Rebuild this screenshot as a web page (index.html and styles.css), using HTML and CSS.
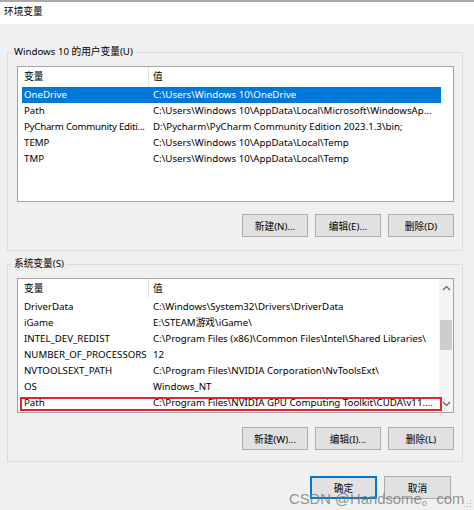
FILE: index.html
```html
<!DOCTYPE html>
<html lang="zh-CN">
<head>
<meta charset="utf-8">
<title>环境变量</title>
<link rel="stylesheet" href="styles.css">
</head>
<body>
<div class="window">
  <div class="titlebar">环境变量</div>
  <div class="content">
    <fieldset class="group group-user">
      <legend>Windows 10 的用户变量(U)</legend>
      <div class="list list-user">
        <div class="list-main">
          <div class="row head"><span class="c1">变量</span><span class="c2">值</span></div>
          <div class="row sel"><span class="c1">OneDrive</span><span class="c2">C:\Users\Windows 10\OneDrive</span></div>
          <div class="row"><span class="c1">Path</span><span class="c2">C:\Users\Windows 10\AppData\Local\Microsoft\WindowsAp...</span></div>
          <div class="row"><span class="c1 tight">PyCharm Community Editi...</span><span class="c2">D:\Pycharm\PyCharm Community Edition 2023.1.3\bin;</span></div>
          <div class="row"><span class="c1">TEMP</span><span class="c2">C:\Users\Windows 10\AppData\Local\Temp</span></div>
          <div class="row"><span class="c1">TMP</span><span class="c2">C:\Users\Windows 10\AppData\Local\Temp</span></div>
        </div>
      </div>
      <div class="buttons">
        <button class="btn">新建(N)...</button>
        <button class="btn">编辑(E)...</button>
        <button class="btn">删除(D)</button>
      </div>
    </fieldset>

    <fieldset class="group group-sys">
      <legend>系统变量(S)</legend>
      <div class="list list-sys">
        <div class="list-main">
          <div class="row head"><span class="c1">变量</span><span class="c2">值</span></div>
          <div class="row"><span class="c1">DriverData</span><span class="c2">C:\Windows\System32\Drivers\DriverData</span></div>
          <div class="row"><span class="c1">iGame</span><span class="c2">E:\STEAM游戏\iGame\</span></div>
          <div class="row"><span class="c1">INTEL_DEV_REDIST</span><span class="c2">C:\Program Files (x86)\Common Files\Intel\Shared Libraries\</span></div>
          <div class="row"><span class="c1">NUMBER_OF_PROCESSORS</span><span class="c2">12</span></div>
          <div class="row"><span class="c1">NVTOOLSEXT_PATH</span><span class="c2">C:\Program Files\NVIDIA Corporation\NvToolsExt\</span></div>
          <div class="row"><span class="c1">OS</span><span class="c2">Windows_NT</span></div>
          <div class="row marked"><span class="c1">Path</span><span class="c2">C:\Program Files\NVIDIA GPU Computing Toolkit\CUDA\v11....</span></div>
        </div>
        <div class="scrollbar">
          <div class="sb-arrow">
            <svg width="9" height="6" viewBox="0 0 9 6"><polyline points="1,5 4.5,1.5 8,5" fill="none" stroke="#606060" stroke-width="1.2"/></svg>
          </div>
          <div class="sb-track"><div class="sb-thumb"></div></div>
          <div class="sb-arrow">
            <svg width="9" height="6" viewBox="0 0 9 6"><polyline points="1,1 4.5,4.5 8,1" fill="none" stroke="#606060" stroke-width="1.2"/></svg>
          </div>
        </div>
      </div>
      <div class="buttons">
        <button class="btn">新建(W)...</button>
        <button class="btn">编辑(I)...</button>
        <button class="btn">删除(L)</button>
      </div>
    </fieldset>

    <div class="dialog-buttons">
      <button class="btn btn-wide btn-default">确定</button>
      <button class="btn btn-wide">取消</button>
    </div>
  </div>
  <div class="watermark">CSDN @Handsome。com</div>
  <svg class="grip" width="8" height="8" viewBox="0 0 8 8">
    <rect x="6" y="0" width="1" height="1" fill="#b0b0b0"/>
    <rect x="3" y="3" width="1" height="1" fill="#b0b0b0"/>
    <rect x="6" y="3" width="1" height="1" fill="#b0b0b0"/>
    <rect x="0" y="6" width="1" height="1" fill="#b0b0b0"/>
    <rect x="3" y="6" width="1" height="1" fill="#b0b0b0"/>
    <rect x="6" y="6" width="1" height="1" fill="#b0b0b0"/>
  </svg>
</div>
</body>
</html>
```

FILE: styles.css
```css
* {
  box-sizing: border-box;
}

html,
body {
  margin: 0;
  padding: 0;
}

body {
  width: 474px;
  height: 510px;
  overflow: hidden;
  background: #f0f0f0;
  font-family: "Noto Sans", "Noto Sans CJK SC", sans-serif;
  font-size: 9.7px;
  color: #000;
}

.window {
  position: relative;
  height: 510px;
  border-top: 2px solid #a9a9a9;
}

.titlebar {
  height: 22px;
  line-height: 20px;
  padding-left: 4px;
  background: #fff;
}

.content {
  padding: 20px 11px 0 7px;
}

.group {
  margin: 0;
  min-width: 0;
  border: 1px solid #dcdcdc;
  padding: 6px 8px 13px 9px;
}

.group legend {
  height: 16px;
  line-height: 16px;
  padding: 0 2px;
  margin-left: -5px;
}

.group-sys {
  margin-top: 5px;
  padding-bottom: 11px;
}

.list {
  display: flex;
  background: #fff;
  border: 1px solid #a3a3a3;
}

.list-user {
  height: 136px;
}

.list-sys {
  height: 135px;
}

.list-main {
  flex: 1;
  min-width: 0;
  padding-left: 4px;
}

.row {
  display: flex;
  width: 419px;
  height: 16px;
  line-height: 16px;
  white-space: nowrap;
}

.row .c1 {
  width: 127px;
  flex: none;
  padding-left: 2px;
  overflow: hidden;
}

.row .c1.tight {
  letter-spacing: -0.25px;
}

.row .c2 {
  flex: 1;
  min-width: 0;
  padding-left: 4px;
  overflow: hidden;
}

.row.head {
  height: 20px;
  line-height: 20px;
}

.row.head .c1 {
  border-right: 1px solid #e5e5e5;
}

.row.sel {
  background: #0078d7;
  color: #fff;
}

.row.marked {
  position: relative;
}

.row.marked::after {
  content: "";
  position: absolute;
  left: -2px;
  right: -1px;
  top: 2px;
  bottom: 0;
  border: 2px solid #e3262b;
}

.scrollbar {
  width: 14px;
  flex: none;
  display: flex;
  flex-direction: column;
  background: #f4f4f4;
}

.sb-arrow {
  height: 17px;
  display: flex;
  align-items: center;
  justify-content: center;
}

.sb-track {
  flex: 1;
  padding: 24px 1px 0 1px;
}

.sb-thumb {
  height: 30px;
  background: #cdcdcd;
}

.buttons {
  display: flex;
  justify-content: flex-end;
  gap: 7px;
  margin-top: 12px;
}

.group-sys .buttons {
  margin-top: 14px;
}

.btn {
  width: 66px;
  height: 23px;
  padding: 0;
  margin: 0;
  background: #e1e1e1;
  border: 1px solid #adadad;
  font-family: inherit;
  font-size: inherit;
  color: #000;
}

.dialog-buttons {
  display: flex;
  justify-content: flex-end;
  gap: 7px;
  margin-top: 14px;
  padding-right: 12px;
}

.btn-wide {
  width: 67px;
}

.btn-default {
  border-color: #0078d7;
  box-shadow: inset 0 0 0 1px #0078d7;
}

.watermark {
  position: absolute;
  left: 289px;
  top: 487px;
  font-family: "Liberation Sans", "Noto Sans CJK SC", sans-serif;
  font-size: 14.8px;
  line-height: 20px;
  color: rgba(120, 120, 120, 0.8);
  white-space: nowrap;
}

.grip {
  position: absolute;
  right: 2px;
  bottom: 2px;
}
```
